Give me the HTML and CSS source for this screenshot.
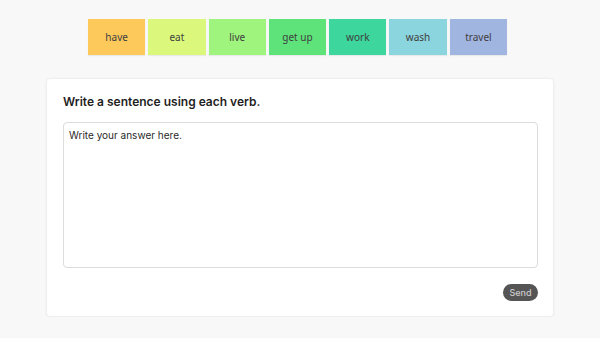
FILE: index.html
```html
<!DOCTYPE html>
<html lang="en">
<head>
    <meta charset="UTF-8">
    <meta name="viewport" content="width=device-width, initial-scale=1.0">
    <title>Verbs</title>
    <link rel="stylesheet" href="styles.css">
</head>
<body>
    <div class="verbs">
        <div class="verb have">have</div>
        <div class="verb eat">eat</div>
        <div class="verb live">live</div>
        <div class="verb getup">get up</div>
        <div class="verb work">work</div>
        <div class="verb wash">wash</div>
        <div class="verb travel">travel</div>
    </div>

    <div class="card">
        <h2 class="title">Write a sentence using each verb.</h2>
        <textarea class="answer" placeholder="Write your answer here."></textarea>
        <div class="actions">
            <button class="send">Send</button>
        </div>
    </div>
</body>
</html>
```

FILE: styles.css
```css
body {
    margin: 0;
    background: #f8f8f8;
    font-family: Inter, "Noto Sans", sans-serif;
    color: #222;
}

.verbs {
    display: flex;
    justify-content: center;
    gap: 3px;
    padding: 19px 5px 0 0;
}

.verb {
    width: 57.3px;
    height: 36px;
    display: flex;
    align-items: center;
    justify-content: center;
    font-family: "Noto Sans", sans-serif;
    font-size: 10px;
    color: #404040;
    box-shadow: 0 1px 1px rgba(0, 0, 0, 0.06);
}

.have { background: #fec95b; }
.eat { background: #dbf87c; }
.live { background: #9ef47c; }
.getup { background: #5ee27a; }
.work { background: #3dd69c; }
.wash { background: #8bd5df; }
.travel { background: #a1b5e1; }

.card {
    margin: 23px 46px 0 46px;
    background: #fff;
    border: 1px solid #eeeeee;
    border-radius: 4px;
    padding: 15px 15px 15px 16px;
    box-shadow: 0 1px 3px rgba(0, 0, 0, 0.04);
}

.title {
    margin: 0 0 12px 0;
    font-size: 12px;
    font-weight: 600;
    line-height: 16px;
    color: #1f1f1f;
}

.answer {
    display: block;
    box-sizing: border-box;
    width: 100%;
    height: 146px;
    margin: 0;
    padding: 6px 5px;
    border: 1px solid #dcdcdc;
    border-radius: 4px;
    font-family: inherit;
    font-size: 10px;
    resize: none;
    outline: none;
}

.answer::placeholder {
    color: #2a2a2a;
    opacity: 1;
}

.actions {
    display: flex;
    justify-content: flex-end;
    padding-top: 16px;
}

.send {
    width: 35px;
    height: 17px;
    padding: 0;
    border: none;
    border-radius: 9px;
    background: #555555;
    color: #cccccc;
    font-family: inherit;
    font-size: 9px;
    font-weight: 500;
}
```
